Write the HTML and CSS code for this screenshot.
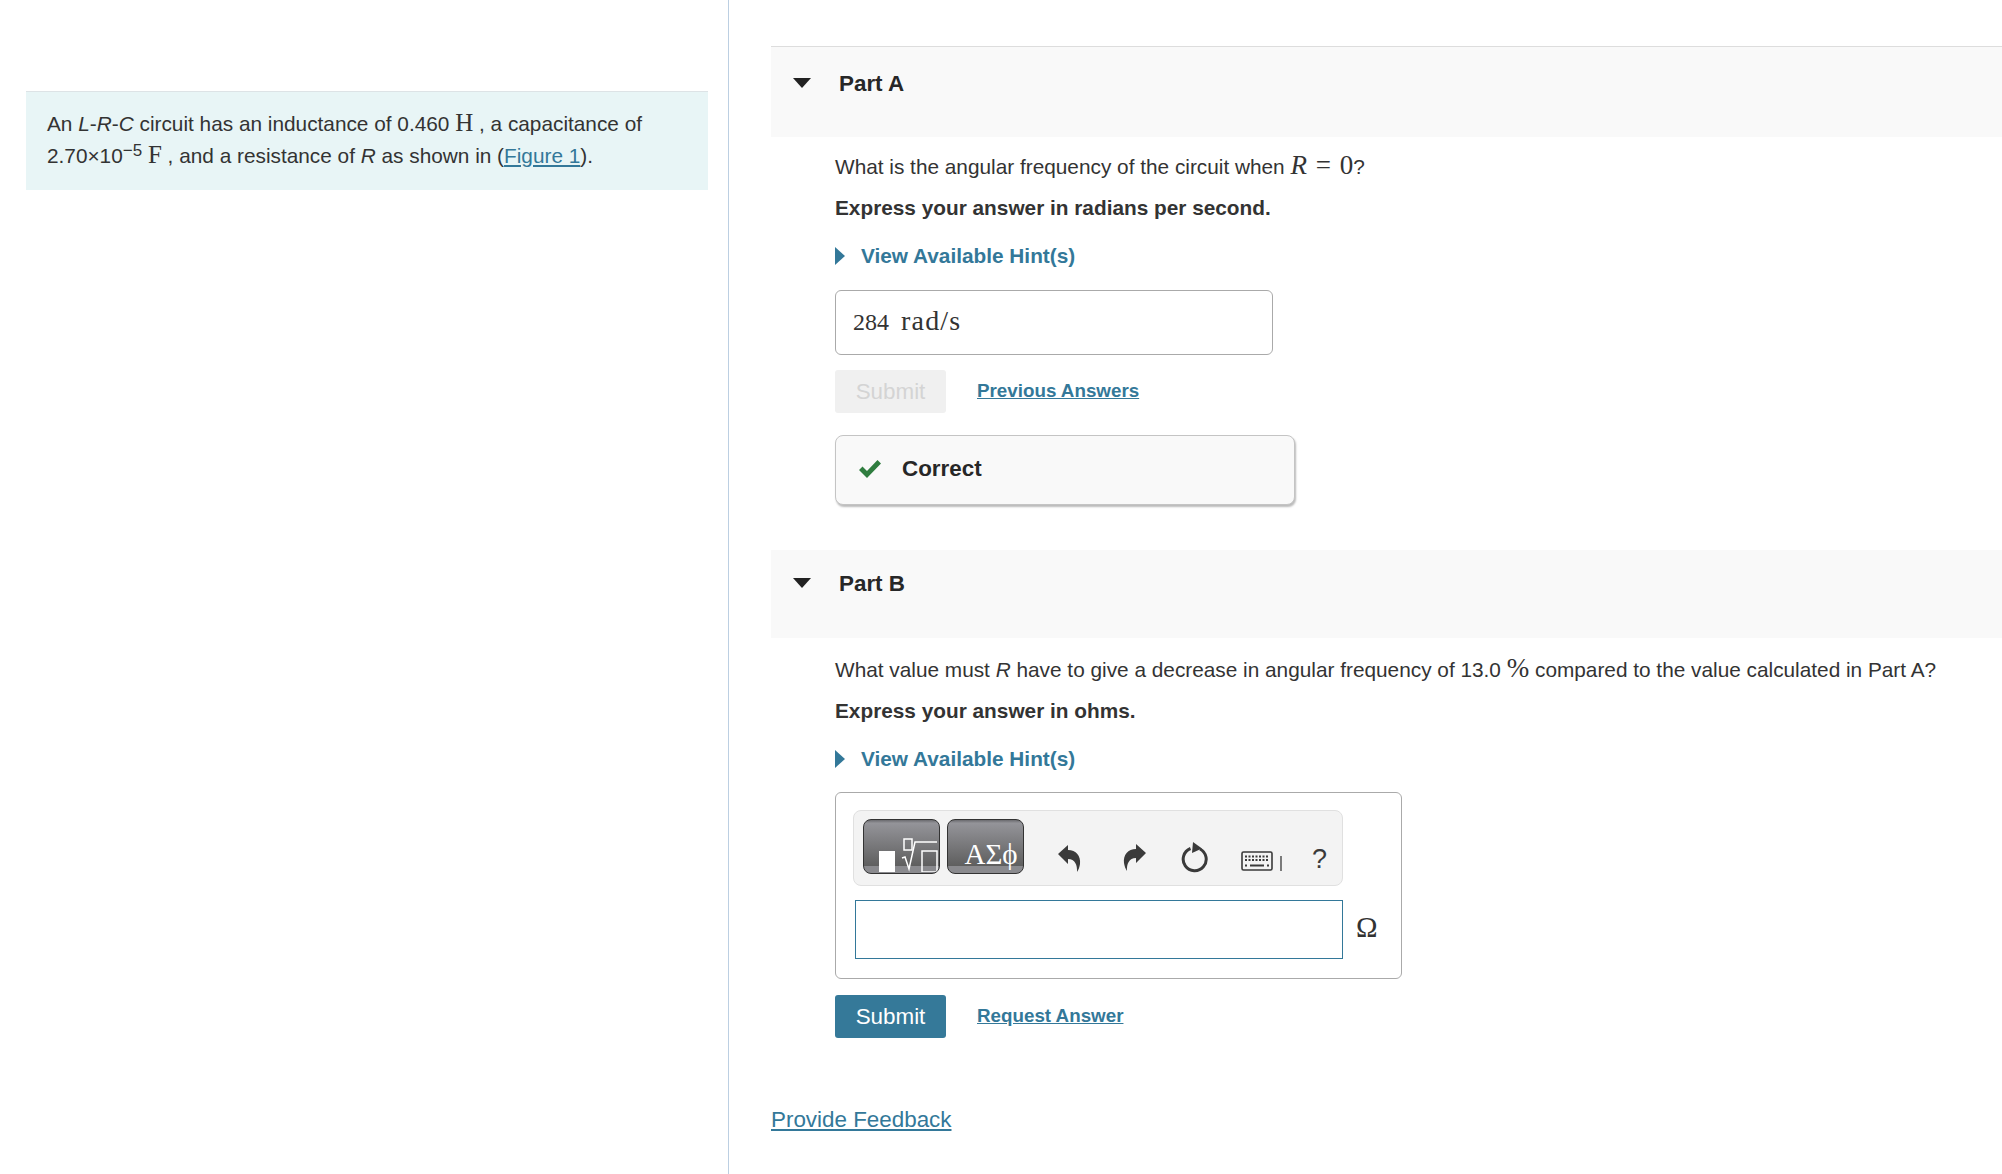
FILE: index.html
```html
<!DOCTYPE html>
<html lang="en">
<head>
    <meta charset="UTF-8">
    <title>Part A and Part B</title>
    <link rel="stylesheet" href="styles.css">
</head>
<body>
    <!-- Problem statement -->
    <aside class="left-pane">
        <div class="intro">
            An <i>L</i>-<i>R</i>-<i>C</i> circuit has an inductance of 0.460 <span class="math">H</span> , a capacitance of
            2.70×10<sup>−5</sup> <span class="math">F</span> , and a resistance of <i>R</i> as shown in (<a href="#">Figure 1</a>).
        </div>
    </aside>

    <main class="right-pane">
        <!-- Part A -->
        <section class="part">
            <div class="part-header part-header-first">
                <span class="arrow-down"></span>
                <h2>Part A</h2>
            </div>
            <div class="part-body">
                <p class="question">What is the angular frequency of the circuit when <span class="math math-large"><i>R</i> = 0</span>?</p>
                <p class="express">Express your answer in radians per second.</p>
                <a class="hint" href="#"><span class="arrow-right"></span>View Available Hint(s)</a>
                <div class="answer-box"><span class="math answer-value">284 <span class="answer-unit">rad/s</span></span></div>
                <div class="actions">
                    <button class="btn btn-disabled">Submit</button>
                    <a class="action-link" href="#">Previous Answers</a>
                </div>
                <div class="correct">
                    <svg class="check" width="24" height="20" viewBox="0 0 24 20"><path d="M1 11 L4.500 7.500 L9 12 L19.500 1 L23 4.500 L9 19 Z" fill="#2f7d3f"/></svg>
                    <span>Correct</span>
                </div>
            </div>
        </section>

        <!-- Part B -->
        <section class="part">
            <div class="part-header">
                <span class="arrow-down"></span>
                <h2>Part B</h2>
            </div>
            <div class="part-body">
                <p class="question">What value must <i>R</i> have to give a decrease in angular frequency of 13.0 <span class="math math-percent">%</span> compared to the value calculated in Part A?</p>
                <p class="express">Express your answer in ohms.</p>
                <a class="hint" href="#"><span class="arrow-right"></span>View Available Hint(s)</a>
                <div class="editor">
                    <div class="toolbar">
                        <div class="tool-btn">
                            <svg width="76" height="52" viewBox="0 0 76 52">
                                <rect x="15" y="31" width="16" height="21" fill="#fff"/>
                                <g fill="none" stroke="#fff" stroke-width="1.500">
                                    <rect x="40" y="19" width="8" height="11"/>
                                    <path d="M38 38 L41 37 L45 49 L51 22 H73"/>
                                    <rect x="58" y="31" width="15" height="21"/>
                                </g>
                            </svg>
                        </div>
                        <div class="tool-btn tool-text">ΑΣϕ</div>
                        <svg class="tool-icon icon-undo" width="24" height="28" viewBox="0 0 24 28"><path d="M1 9 L11 0 V5 C19 5 24 11 23 19 C22.500 22 21.500 25 20 27 C20.500 20 18 14 11 14 V19 Z" fill="#3a3a3a"/></svg>
                        <svg class="tool-icon icon-redo" width="24" height="28" viewBox="0 0 24 28"><path d="M23 9 L13 0 V5 C5 5 0 11 1 19 C1.500 22 2.500 25 4 27 C3.500 20 6 14 13 14 V19 Z" fill="#3a3a3a"/></svg>
                        <svg class="tool-icon icon-reset" width="28" height="32" viewBox="0 0 28 32"><path d="M9.500 6.500 A11.500 11.500 0 1 0 19 7" fill="none" stroke="#3a3a3a" stroke-width="3"/><path d="M12 0 L21 6.500 L11 11 Z" fill="#3a3a3a"/></svg>
                        <svg class="tool-icon icon-keys" width="42" height="22" viewBox="0 0 42 22">
                            <rect x="1" y="2" width="30" height="18" rx="1.500" fill="none" stroke="#3a3a3a" stroke-width="1.600"/>
                            <path d="M4 6.500 H28 M4 10 H28" stroke="#3a3a3a" stroke-width="2" stroke-dasharray="2 1.500"/>
                            <path d="M4 15.500 H6 M9 15.500 H23 M26 15.500 H28" stroke="#3a3a3a" stroke-width="2"/>
                            <path d="M40 6 V21" stroke="#3a3a3a" stroke-width="1.300"/>
                        </svg>
                        <span class="tool-help">?</span>
                    </div>
                    <div class="input-row">
                        <div class="math-input"></div>
                        <span class="math unit">Ω</span>
                    </div>
                </div>
                <div class="actions actions-b">
                    <button class="btn btn-primary">Submit</button>
                    <a class="action-link" href="#">Request Answer</a>
                </div>
            </div>
        </section>

        <a class="feedback" href="#">Provide Feedback</a>
    </main>
</body>
</html>
```

FILE: styles.css
```css
body {
    font-family: "Liberation Sans", Arial, sans-serif;
    font-size: 20.8px;
    color: #333;
    margin: 0;
    padding: 0;
    display: flex;
    height: 1174px;
    overflow: hidden;
}
a {
    color: #337899;
}
i {
    font-style: italic;
}
.math {
    font-family: "Liberation Serif", "DejaVu Serif", serif;
    font-size: 25px;
}
.math-large {
    font-size: 27px;
    word-spacing: 2px;
}
.math-percent {
    font-size: 27px;
}

/* left column */
.left-pane {
    width: 729px;
    flex: none;
    box-sizing: border-box;
    border-right: 1px solid #bccfe2;
    padding: 91px 20px 0 26px;
}
.intro {
    background-color: #e8f5f6;
    border-top: 1px solid #dde3e6;
    padding: 15px 21px 18px;
    line-height: 31px;
    height: 99px;
    box-sizing: border-box;
}
.intro sup {
    font-size: 17px;
    line-height: 0;
    vertical-align: 7px;
}

/* right column */
.right-pane {
    flex: 1;
    padding: 46px 0 0 42px;
    min-width: 0;
}
.part-header {
    background-color: #f9f9f9;
    height: 88px;
    display: flex;
    align-items: flex-start;
    padding-top: 21px;
    box-sizing: border-box;
}
.part-header-first {
    border-top: 1px solid #ddd;
    height: 91px;
    padding-top: 24px;
}
.part-header h2 {
    font-size: 22.4px;
    line-height: 26px;
    color: #272727;
    margin: 0;
}
.arrow-down {
    width: 0;
    height: 0;
    border-left: 9px solid transparent;
    border-right: 9px solid transparent;
    border-top: 10px solid #222;
    margin: 7px 28px 0 22px;
}
.part-body {
    padding-left: 64px;
}
.question {
    margin: 0;
    padding-top: 11px;
    line-height: 34px;
    white-space: nowrap;
}
.part + .part .question {
    padding-top: 13px;
}
.express {
    font-weight: bold;
    margin: 7px 0 0;
    line-height: 34px;
}
.hint {
    display: flex;
    align-items: center;
    height: 34px;
    margin-top: 14px;
    font-weight: bold;
    text-decoration: none;
}
.arrow-right {
    width: 0;
    height: 0;
    border-top: 9px solid transparent;
    border-bottom: 9px solid transparent;
    border-left: 10px solid #337899;
    margin-right: 16px;
}
.answer-box {
    width: 438px;
    height: 65px;
    box-sizing: border-box;
    margin-top: 17px;
    border: 1px solid #aaa;
    border-radius: 6px;
    padding: 0 0 3px 17px;
    display: flex;
    align-items: center;
}
.answer-value {
    font-size: 24px;
    word-spacing: 6px;
}
.answer-unit {
    font-size: 28px;
    letter-spacing: 1.200px;
}
.actions {
    display: flex;
    align-items: center;
    gap: 31px;
    margin-top: 15px;
}
.actions-b {
    margin-top: 16px;
}
.btn {
    width: 111px;
    height: 43px;
    border: 0;
    border-radius: 3px;
    font-family: "Liberation Sans", Arial, sans-serif;
    font-size: 22.4px;
    padding: 0;
}
.btn-disabled {
    background-color: #f0f0f0;
    color: #d4d4d4;
}
.btn-primary {
    background-color: #357999;
    color: #fff;
}
.action-link {
    font-size: 18.8px;
    font-weight: bold;
    margin-top: -1px;
}
.correct {
    width: 460px;
    height: 70px;
    box-sizing: border-box;
    margin-top: 22px;
    background-color: #f9f9f9;
    border: 1px solid #c4c4c4;
    border-radius: 8px;
    box-shadow: 1px 2px 2px #bbb;
    display: flex;
    align-items: center;
    padding: 0 0 2px 22px;
    font-size: 22.4px;
    font-weight: bold;
    color: #272727;
}
.check {
    margin-right: 20px;
}
.part + .part {
    margin-top: 45px;
}

/* answer editor */
.editor {
    width: 567px;
    height: 187px;
    box-sizing: border-box;
    margin-top: 16px;
    border: 1px solid #aaa;
    border-radius: 6px;
    padding: 17px 0 0 17px;
}
.toolbar {
    width: 490px;
    height: 76px;
    box-sizing: border-box;
    background-color: #f3f3f3;
    border: 1px solid #e0e0e0;
    border-radius: 8px;
    position: relative;
    display: flex;
    padding: 8px 0 0 9px;
    gap: 7px;
}
.tool-btn {
    width: 77px;
    height: 55px;
    box-sizing: border-box;
    border: 1px solid #333;
    border-radius: 8px;
    overflow: hidden;
    background: linear-gradient(#6b6b6f 0, #949499 6%, #5f5f5f 86%, #8a8a8e 87%, #8a8a8e 100%);
}
.tool-text {
    color: #fff;
    font-family: "Liberation Serif", "DejaVu Serif", serif;
    font-size: 29px;
    line-height: 28px;
    padding: 20px 0 0 11px;
    text-align: center;
    white-space: nowrap;
}
.tool-icon {
    position: absolute;
}
.icon-undo {
    left: 203px;
    top: 34px;
}
.icon-redo {
    left: 269px;
    top: 33px;
}
.icon-reset {
    left: 327px;
    top: 31px;
}
.icon-keys {
    left: 387px;
    top: 39px;
}
.tool-help {
    position: absolute;
    left: 458px;
    top: 33px;
    font-size: 27px;
    line-height: 30px;
    color: #3a3a3a;
}
.input-row {
    display: flex;
    align-items: center;
    margin-top: 14px;
}
.math-input {
    width: 488px;
    height: 59px;
    box-sizing: border-box;
    border: 1px solid #337899;
    margin-left: 2px;
}
.unit {
    margin: -6px 0 0 13px;
    font-size: 29px;
    line-height: 40px;
}
.feedback {
    display: inline-block;
    margin-top: 69px;
    font-size: 22.4px;
}
```
